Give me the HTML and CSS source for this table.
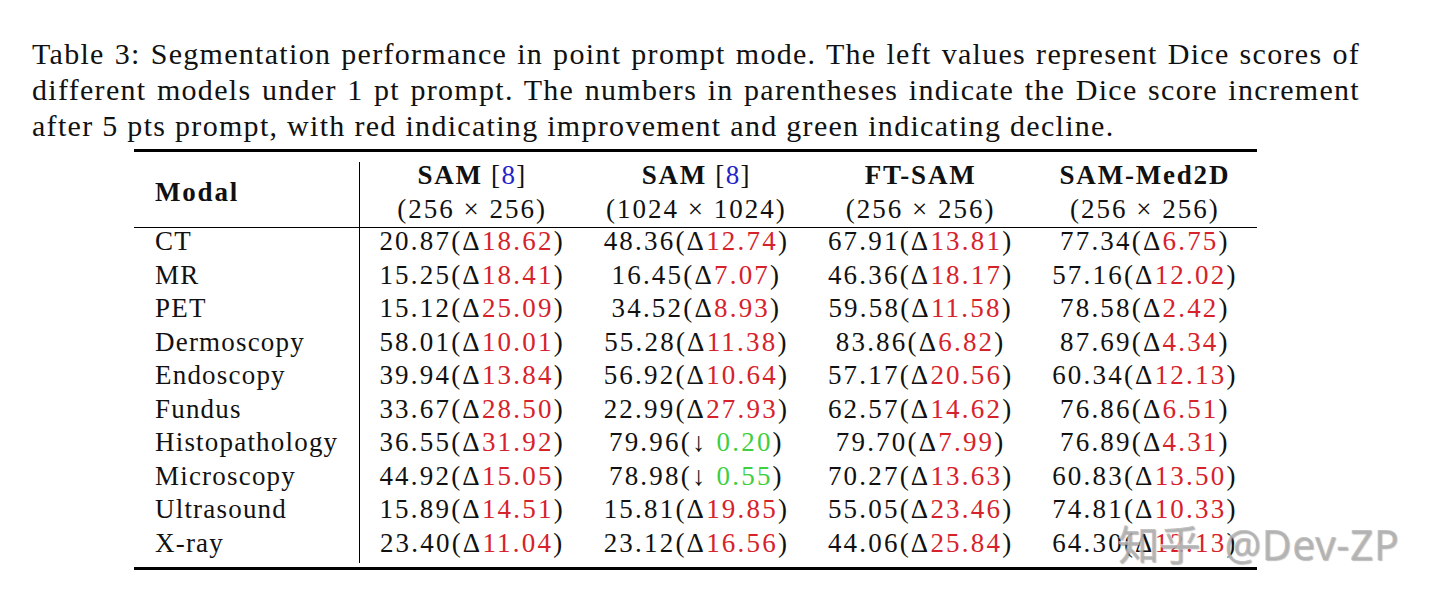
FILE: index.html
```html
<!DOCTYPE html>
<html lang="en">
<head>
<meta charset="utf-8">
<title>Table 3</title>
<link rel="stylesheet" href="styles.css">
</head>
<body>
<div class="page">
  <div class="caption">
    <div class="cap-line justify">Table 3: Segmentation performance in point prompt mode. The left values represent Dice scores of</div>
    <div class="cap-line justify">different models under 1 pt prompt. The numbers in parentheses indicate the Dice score increment</div>
    <div class="cap-line">after 5 pts prompt, with red indicating improvement and green indicating decline.</div>
  </div>
  <div class="tbl">
    <div class="head">
      <div class="hcell modal-h"><b>Modal</b></div>
      <div class="hcell"><div><b>SAM</b> [<span class="ref">8</span>]</div><div class="num">(256 × 256)</div></div>
      <div class="hcell"><div><b>SAM</b> [<span class="ref">8</span>]</div><div class="num">(1024 × 1024)</div></div>
      <div class="hcell"><div><b>FT-SAM</b></div><div class="num">(256 × 256)</div></div>
      <div class="hcell"><div><b>SAM-Med2D</b></div><div class="num">(256 × 256)</div></div>
    </div>
    <div class="body">
      <div class="row"><div class="mod">CT</div><div class="val">20.87(Δ<span class="up">18.62</span>)</div><div class="val">48.36(Δ<span class="up">12.74</span>)</div><div class="val">67.91(Δ<span class="up">13.81</span>)</div><div class="val">77.34(Δ<span class="up">6.75</span>)</div></div>
      <div class="row"><div class="mod">MR</div><div class="val">15.25(Δ<span class="up">18.41</span>)</div><div class="val">16.45(Δ<span class="up">7.07</span>)</div><div class="val">46.36(Δ<span class="up">18.17</span>)</div><div class="val">57.16(Δ<span class="up">12.02</span>)</div></div>
      <div class="row"><div class="mod">PET</div><div class="val">15.12(Δ<span class="up">25.09</span>)</div><div class="val">34.52(Δ<span class="up">8.93</span>)</div><div class="val">59.58(Δ<span class="up">11.58</span>)</div><div class="val">78.58(Δ<span class="up">2.42</span>)</div></div>
      <div class="row"><div class="mod">Dermoscopy</div><div class="val">58.01(Δ<span class="up">10.01</span>)</div><div class="val">55.28(Δ<span class="up">11.38</span>)</div><div class="val">83.86(Δ<span class="up">6.82</span>)</div><div class="val">87.69(Δ<span class="up">4.34</span>)</div></div>
      <div class="row"><div class="mod">Endoscopy</div><div class="val">39.94(Δ<span class="up">13.84</span>)</div><div class="val">56.92(Δ<span class="up">10.64</span>)</div><div class="val">57.17(Δ<span class="up">20.56</span>)</div><div class="val">60.34(Δ<span class="up">12.13</span>)</div></div>
      <div class="row"><div class="mod">Fundus</div><div class="val">33.67(Δ<span class="up">28.50</span>)</div><div class="val">22.99(Δ<span class="up">27.93</span>)</div><div class="val">62.57(Δ<span class="up">14.62</span>)</div><div class="val">76.86(Δ<span class="up">6.51</span>)</div></div>
      <div class="row"><div class="mod">Histopathology</div><div class="val">36.55(Δ<span class="up">31.92</span>)</div><div class="val">79.96(↓ <span class="down">0.20</span>)</div><div class="val">79.70(Δ<span class="up">7.99</span>)</div><div class="val">76.89(Δ<span class="up">4.31</span>)</div></div>
      <div class="row"><div class="mod">Microscopy</div><div class="val">44.92(Δ<span class="up">15.05</span>)</div><div class="val">78.98(↓ <span class="down">0.55</span>)</div><div class="val">70.27(Δ<span class="up">13.63</span>)</div><div class="val">60.83(Δ<span class="up">13.50</span>)</div></div>
      <div class="row"><div class="mod">Ultrasound</div><div class="val">15.89(Δ<span class="up">14.51</span>)</div><div class="val">15.81(Δ<span class="up">19.85</span>)</div><div class="val">55.05(Δ<span class="up">23.46</span>)</div><div class="val">74.81(Δ<span class="up">10.33</span>)</div></div>
      <div class="row"><div class="mod">X-ray</div><div class="val">23.40(Δ<span class="up">11.04</span>)</div><div class="val">23.12(Δ<span class="up">16.56</span>)</div><div class="val">44.06(Δ<span class="up">25.84</span>)</div><div class="val">64.30(Δ<span class="up">12.13</span>)</div></div>
    </div>
  </div>
  <div class="watermark">知乎 @Dev-ZP</div>
</div>
</body>
</html>
```
FILE: styles.css
```css
html, body {
  margin: 0;
  padding: 0;
  background: #ffffff;
}

.page {
  position: relative;
  width: 1430px;
  height: 604px;
  padding: 36px 0 0 0;
  box-sizing: border-box;
  font-family: "Liberation Serif", "Times New Roman", serif;
  color: #111111;
}

.caption {
  margin-left: 32px;
  width: 1328px;
  font-size: 30px;
  line-height: 36px;
  letter-spacing: 1.3px;
}

.cap-line {
  white-space: nowrap;
}

.cap-line.justify {
  text-align: justify;
  text-align-last: justify;
}

.tbl {
  margin: 5px 0 0 134px;
  width: 1123px;
  border-top: 3.5px solid #000;
  border-bottom: 3.5px solid #000;
  font-size: 27px;
}

.head {
  display: grid;
  grid-template-columns: 226px repeat(4, 1fr);
  height: 76px;
  border-bottom: 1.5px solid #000;
  box-sizing: border-box;
}

.hcell {
  text-align: center;
  padding-top: 6px;
  line-height: 34px;
  letter-spacing: 1.4px;
  white-space: nowrap;
}

.hcell b {
  font-weight: 700;
  letter-spacing: 1.8px;
}

.modal-h {
  text-align: left;
  margin-top: 10px;
  padding: 17px 0 0 21px;
  line-height: 27px;
  border-right: 1px solid #000;
}

.hcell .num {
  letter-spacing: 2px;
}

.ref {
  color: #2323c8;
}

.body {
  padding-bottom: 4px;
}

.row {
  display: grid;
  grid-template-columns: 226px repeat(4, 1fr);
  height: 33.5px;
  line-height: 27px;
}

.mod {
  padding-left: 21px;
  border-right: 1px solid #000;
  letter-spacing: 1.2px;
  white-space: nowrap;
}

.val {
  text-align: center;
  letter-spacing: 2.2px;
  white-space: nowrap;
}

.up {
  color: #d6222b;
}

.down {
  color: #3fcf3f;
}

.watermark {
  position: absolute;
  left: 1118px;
  top: 524px;
  font-family: "Noto Sans", "Noto Sans CJK SC", sans-serif;
  font-size: 41px;
  line-height: 1;
  letter-spacing: 0.5px;
  word-spacing: 12px;
  color: rgba(175, 175, 175, 0.75);
  text-shadow: 1px 1px 1px rgba(90, 90, 90, 0.4), -1px -1px 0 rgba(255, 255, 255, 0.6);
  white-space: nowrap;
}
```
